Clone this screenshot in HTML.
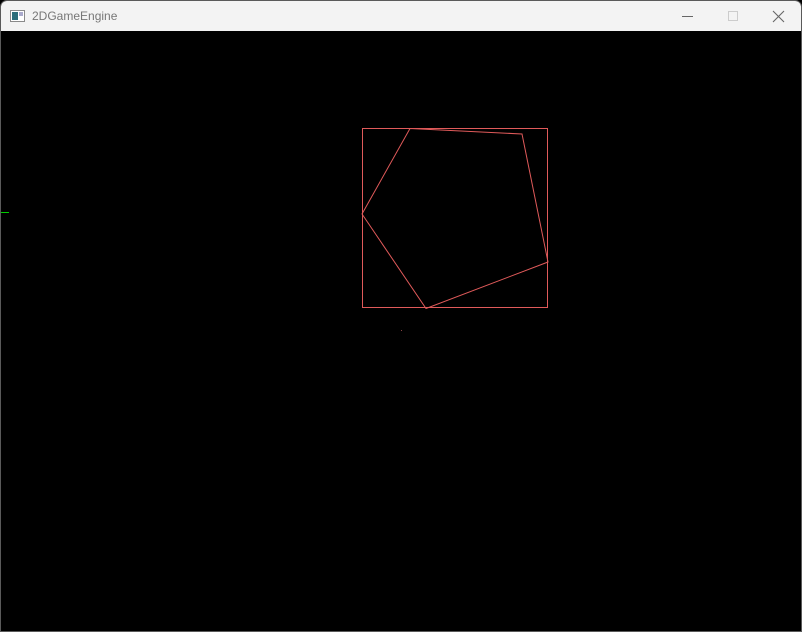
<!DOCTYPE html>
<html><head><style>
html,body{margin:0;padding:0;width:802px;height:632px;overflow:hidden;background:#000}
.win{position:absolute;left:0;top:0;width:800px;height:630px;border:1px solid #5a5a5a;border-radius:7px 7px 0 0;overflow:hidden;background:#000}
.tb{position:absolute;left:0;top:0;width:800px;height:30px;background:#f3f3f3}
.tt{position:absolute;left:31px;top:8px;font:12px "Liberation Sans",sans-serif;color:#777}
</style></head><body>
<div class="win">
<div class="tb">
<svg width="800" height="30" style="position:absolute;left:0;top:0">
<rect x="9.5" y="9.5" width="14" height="11" fill="#fff" stroke="#8a8a8a"/>
<rect x="11" y="11" width="6" height="8" fill="#2c6d7a"/>
<rect x="18" y="11" width="4" height="4" fill="#aac"/>
<line x1="681" y1="15.5" x2="692" y2="15.5" stroke="#666"/>
<rect x="727.5" y="10.5" width="9" height="9" fill="none" stroke="#ccc"/>
<path d="M772 10L783 21M783 10L772 21" stroke="#666" stroke-width="1.1"/>
</svg>
<div class="tt">2DGameEngine</div>
</div>
<svg width="802" height="632" style="position:absolute;left:-1px;top:-1px">
<rect x="1" y="212" width="8" height="1" fill="#0c0"/>
<rect x="362.5" y="128.5" width="185" height="179" fill="none" stroke="#e05a5a" stroke-width="1"/>
<polygon points="410,128.5 522,134 548,262 426,308.5 362,214" fill="none" stroke="#e05a5a" stroke-width="1"/>
<rect x="401" y="330" width="1" height="1" fill="#844"/>
</svg>
</div>
</body></html>
